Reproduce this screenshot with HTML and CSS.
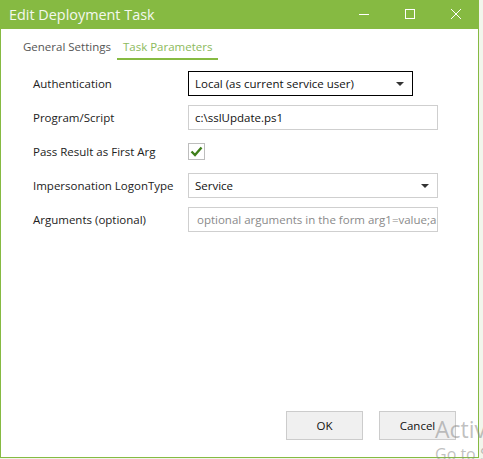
FILE: index.html
```html
<!DOCTYPE html>
<html lang="en">
<head>
<meta charset="utf-8">
<title>Edit Deployment Task</title>
<link rel="stylesheet" href="styles.css">
</head>
<body>
<div class="screen">
  <div class="window">
    <div class="titlebar">
      <span class="title">Edit Deployment Task</span>
      <div class="controls">
        <svg class="ctl" width="46" height="29" viewBox="0 0 46 29"><line x1="18" y1="14.5" x2="28" y2="14.5" stroke="#fff" stroke-width="1"/></svg>
        <svg class="ctl" width="46" height="29" viewBox="0 0 46 29"><rect x="18.5" y="9.5" width="9" height="9" fill="none" stroke="#fff" stroke-width="1"/></svg>
        <svg class="ctl" width="46" height="29" viewBox="0 0 46 29"><path d="M18 9 L28 19 M28 9 L18 19" stroke="#fff" stroke-width="1"/></svg>
      </div>
    </div>
    <div class="body">
      <div class="tabs">
        <div class="tab">General Settings</div>
        <div class="tab active">Task Parameters</div>
      </div>
      <div class="form">
        <label class="lbl">Authentication</label>
        <div class="field select focused short">
          <span>Local (as current service user)</span>
          <span class="arrow"></span>
        </div>

        <label class="lbl">Program/Script</label>
        <div class="field"><span>c:\sslUpdate.ps1</span></div>

        <label class="lbl">Pass Result as First Arg</label>
        <div class="checkwrap">
          <div class="checkbox">
            <svg width="15" height="15" viewBox="0 0 15 15"><path d="M2.5 7.5 L6 11 L12.5 3.5" fill="none" stroke="#3f7f1a" stroke-width="2.4"/></svg>
          </div>
        </div>

        <label class="lbl">Impersonation LogonType</label>
        <div class="field select">
          <span>Service</span>
          <span class="arrow"></span>
        </div>

        <label class="lbl">Arguments (optional)</label>
        <div class="field placeholder"><span>optional arguments in the form arg1=value;arg2=value</span></div>
      </div>
      <div class="footer">
        <button class="btn">OK</button>
        <button class="btn">Cancel</button>
      </div>
    </div>
  </div>
  <div class="watermark">
    <div class="wm1">Activate Windows</div>
    <div class="wm2">Go to Settings to activate Windows.</div>
  </div>
</div>
</body>
</html>
```

FILE: styles.css
```css
html, body {
  margin: 0;
  padding: 0;
  width: 483px;
  height: 459px;
  overflow: hidden;
  background: #f2f6ec;
  font-family: "Open Sans", "Noto Sans", sans-serif;
}

.screen {
  position: relative;
  width: 483px;
  height: 459px;
  overflow: hidden;
}

.window {
  width: 477px;
  height: 457px;
  border: 1px solid #86ba42;
  border-top: none;
  background: #fff;
  display: flex;
  flex-direction: column;
}

.titlebar {
  height: 29px;
  background: #86ba42;
  display: flex;
  align-items: center;
  justify-content: space-between;
  margin: 0 -1px;
}

.title {
  color: #f4f8ee;
  font-size: 14.4px;
  padding-left: 9px;
  line-height: 29px;
}

.controls {
  display: flex;
}

.ctl {
  display: block;
}

.body {
  flex: 1;
  display: flex;
  flex-direction: column;
}

.tabs {
  display: flex;
  padding-left: 16px;
  margin-top: 7px;
}

.tab {
  font-size: 11.5px;
  line-height: 22px;
  padding: 0 6px;
  color: #555;
  border-bottom: 2px solid transparent;
}

.tab.active {
  color: #8cba5c;
  border-bottom-color: #86ba42;
}

.form {
  display: grid;
  grid-template-columns: 155px 250px;
  grid-auto-rows: 25px;
  row-gap: 9px;
  padding-left: 32px;
  margin-top: 11px;
  align-items: center;
}

.lbl {
  font-size: 11.5px;
  color: #222;
}

.field {
  height: 25px;
  box-sizing: border-box;
  border: 1px solid #cfcfcf;
  display: flex;
  align-items: center;
  padding: 0 6px;
  font-size: 11.5px;
  color: #111;
  white-space: nowrap;
  overflow: hidden;
}

.field.select {
  justify-content: space-between;
  padding-right: 8px;
}

.field.focused {
  border-color: #000;
}

.field.short {
  width: 225px;
}

.field.placeholder {
  color: #8a8a8a;
  padding-left: 8px;
}

.arrow {
  width: 0;
  height: 0;
  border-left: 4px solid transparent;
  border-right: 4px solid transparent;
  border-top: 4px solid #333;
  flex: none;
}

.checkwrap {
  display: flex;
  align-items: center;
}

.checkbox {
  width: 17px;
  height: 17px;
  box-sizing: border-box;
  border: 1px solid #bdbdbd;
  display: flex;
  align-items: center;
  justify-content: center;
}

.checkbox svg {
  display: block;
}

.footer {
  margin-top: auto;
  display: flex;
  justify-content: flex-end;
  gap: 16px;
  padding-right: 22px;
  padding-bottom: 17px;
}

.btn {
  width: 77px;
  height: 29px;
  background: #f0f0f0;
  border: 1px solid #cccccc;
  font-family: inherit;
  font-size: 11.5px;
  color: #111;
  padding: 0;
}

.watermark {
  position: absolute;
  left: 435px;
  top: 414px;
  white-space: nowrap;
  color: rgba(140, 140, 140, 0.55);
  pointer-events: none;
}

.wm1 {
  font-size: 23px;
  line-height: 30px;
}

.wm2 {
  font-size: 16px;
  line-height: 20px;
  margin-top: 0;
}
```
